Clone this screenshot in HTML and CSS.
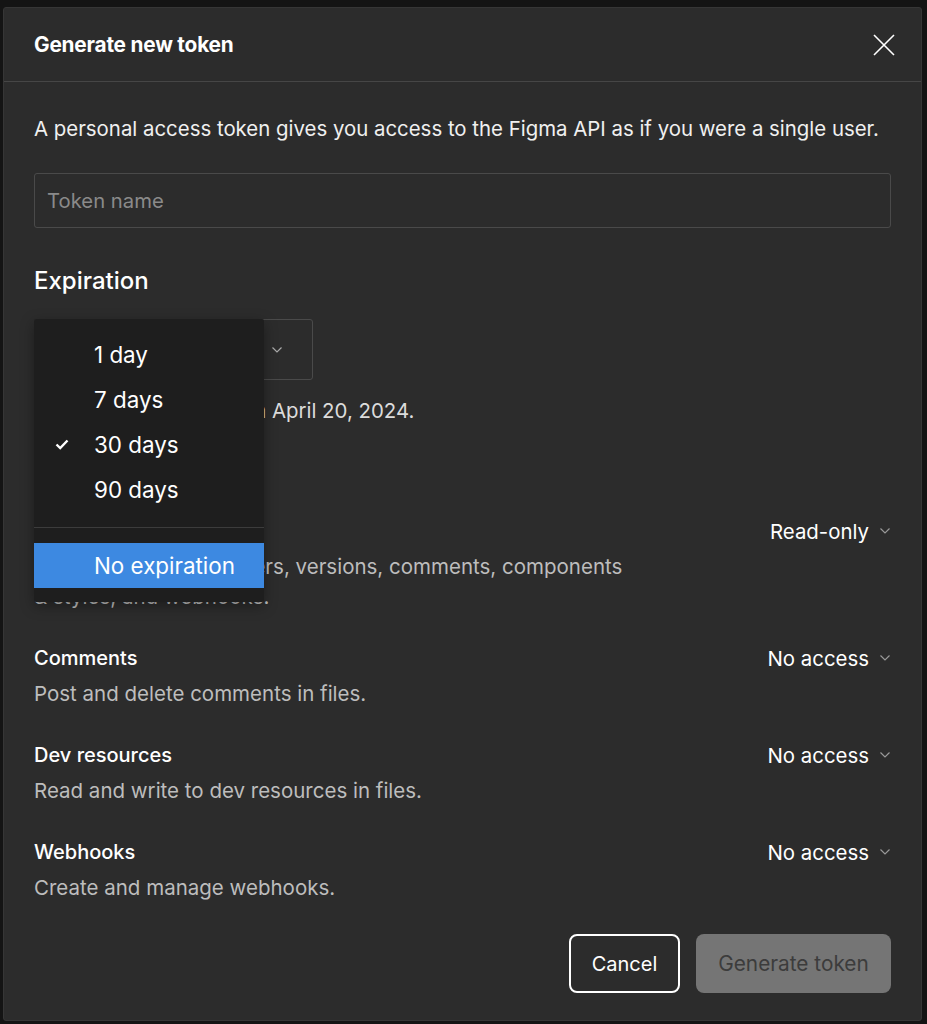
FILE: index.html
```html
<!DOCTYPE html>
<html lang="en">
<head>
  <meta charset="UTF-8">
  <meta name="viewport" content="width=device-width, initial-scale=1.0">
  <title>Generate new token</title>
  <link rel="stylesheet" href="styles.css">
</head>
<body>
  <div class="modal">
    <div class="modal-header">
      <h1>Generate new token</h1>
      <button class="close" aria-label="Close">
        <svg width="22" height="22" viewBox="0 0 22 22"><path d="M1 1L21 21M21 1L1 21" stroke="#fff" stroke-width="1.6" fill="none"/></svg>
      </button>
    </div>

    <div class="modal-body">
      <p class="intro">A personal access token gives you access to the Figma API as if you were a single user.</p>
      <input class="token-input" type="text" placeholder="Token name">

      <h2>Expiration</h2>
      <div class="expiration">
        <div class="select">
          <span>30 days</span>
          <svg class="chev" width="10" height="6" viewBox="0 0 10 6"><path d="M0.5 0.5L5 5L9.5 0.5" stroke="#aaa" stroke-width="1.2" fill="none"/></svg>
        </div>
        <p class="expires">This token will expire on April 20, 2024.</p>

        <!-- menu opened over the rest of the form -->
        <ul class="menu">
          <li>1 day</li>
          <li>7 days</li>
          <li class="checked">
            <svg class="check" width="14" height="11" viewBox="0 0 14 11"><path d="M1.5 5.5L5.2 9L12.5 1.5" stroke="#fff" stroke-width="2.4" fill="none"/></svg>
            30 days
          </li>
          <li>90 days</li>
          <li class="sep"></li>
          <li class="active">No expiration</li>
        </ul>
      </div>

      <div class="scopes">
        <div class="scope first">
          <div class="scope-row">
            <span class="scope-name">File content</span>
            <span class="scope-select">Read-only <svg width="10" height="6" viewBox="0 0 10 6"><path d="M0.5 0.5L5 5L9.5 0.5" stroke="#999" stroke-width="1.2" fill="none"/></svg></span>
          </div>
          <p class="scope-desc">Read files and their layers, versions, comments, components<br>&amp; styles, and webhooks.</p>
        </div>
        <div class="scope">
          <div class="scope-row">
            <span class="scope-name">Comments</span>
            <span class="scope-select">No access <svg width="10" height="6" viewBox="0 0 10 6"><path d="M0.5 0.5L5 5L9.5 0.5" stroke="#999" stroke-width="1.2" fill="none"/></svg></span>
          </div>
          <p class="scope-desc">Post and delete comments in files.</p>
        </div>
        <div class="scope">
          <div class="scope-row">
            <span class="scope-name">Dev resources</span>
            <span class="scope-select">No access <svg width="10" height="6" viewBox="0 0 10 6"><path d="M0.5 0.5L5 5L9.5 0.5" stroke="#999" stroke-width="1.2" fill="none"/></svg></span>
          </div>
          <p class="scope-desc">Read and write to dev resources in files.</p>
        </div>
        <div class="scope">
          <div class="scope-row">
            <span class="scope-name">Webhooks</span>
            <span class="scope-select">No access <svg width="10" height="6" viewBox="0 0 10 6"><path d="M0.5 0.5L5 5L9.5 0.5" stroke="#999" stroke-width="1.2" fill="none"/></svg></span>
          </div>
          <p class="scope-desc">Create and manage webhooks.</p>
        </div>
      </div>

      <div class="actions">
        <button class="btn btn-cancel">Cancel</button>
        <button class="btn btn-primary" disabled>Generate token</button>
      </div>
    </div>
  </div>
</body>
</html>
```

FILE: styles.css
```css
* {
  margin: 0;
  padding: 0;
  box-sizing: border-box;
}
body {
  background: #141414;
  padding: 7px 5px 3px 3px;
  font-family: Inter, "Liberation Sans", sans-serif;
  color: #fff;
}
.modal {
  width: 919px;
  height: 1014px;
  background: #2c2c2c;
  border: 1px solid #363636;
  border-radius: 3px;
}
.modal-header {
  height: 74px;
  display: flex;
  align-items: center;
  justify-content: space-between;
  padding: 0 26px 0 30px;
  border-bottom: 1px solid #464646;
}
h1 {
  font-size: 20.8px;
  font-weight: 700;
  letter-spacing: -0.2px;
}
.close {
  background: none;
  border: none;
  width: 22px;
  height: 22px;
  cursor: pointer;
}
.close svg {
  display: block;
}
.modal-body {
  padding: 0 30px 0 30px;
}
.intro {
  font-size: 20.4px;
  line-height: 24px;
  margin-top: 35px;
  color: #f0f0f0;
}
.token-input {
  display: block;
  width: 100%;
  height: 55px;
  margin-top: 32px;
  background: transparent;
  border: 1.5px solid #4a4a4a;
  border-radius: 3px;
  padding: 0 12px;
  font-family: inherit;
  font-size: 20.3px;
  color: #fff;
}
.token-input::placeholder {
  color: #8a8a8a;
}
h2 {
  font-size: 24px;
  font-weight: 500;
  line-height: 28px;
  margin-top: 39px;
}
.expiration {
  position: relative;
  margin-top: 24px;
}
.select {
  width: 279px;
  height: 61px;
  border: 1.5px solid #4a4a4a;
  border-radius: 3px;
  display: flex;
  align-items: center;
  justify-content: space-between;
  padding: 0 30px 0 58px;
  font-size: 20px;
}
.expires {
  font-size: 20.4px;
  line-height: 24px;
  margin-top: 19px;
  color: #dcdcdc;
}
.menu {
  list-style: none;
  position: absolute;
  top: 0;
  left: 0;
  width: 230px;
  background: #1e1e1e;
  border-radius: 2px;
  box-shadow: 0 4px 14px rgba(0, 0, 0, 0.35);
  padding: 13px 0 14px;
  z-index: 2;
}
.menu li {
  position: relative;
  height: 45px;
  line-height: 45px;
  padding-left: 60px;
  font-size: 22.4px;
  color: #fff;
}
.menu .check {
  position: absolute;
  left: 21px;
  top: 17px;
}
.menu .sep {
  height: 1px;
  margin: 15px 0 15px;
  background: #3c3c3c;
}
.menu .active {
  background: #3d89e1;
  height: 45px;
}
.scope {
  margin-top: 34px;
}
.scope.first {
  margin-top: 96px;
}
.scope-row {
  display: flex;
  justify-content: space-between;
  align-items: center;
  height: 24px;
}
.scope-name {
  font-size: 20px;
  font-weight: 500;
}
.scope-select {
  font-size: 20.4px;
  display: flex;
  align-items: center;
  gap: 11px;
  margin-right: 1px;
}
.scope-desc {
  font-size: 20.5px;
  line-height: 30px;
  color: #bdbdbd;
  margin-top: 9px;
}
.actions {
  display: flex;
  justify-content: flex-end;
  gap: 16px;
  margin-top: 31px;
}
.btn {
  height: 59px;
  border-radius: 8px;
  font-family: inherit;
  font-size: 20px;
  cursor: pointer;
}
.btn-cancel {
  width: 111px;
  background: transparent;
  border: 2px solid #fff;
  color: #fff;
}
.btn-primary {
  width: 195px;
  background: #757575;
  border: none;
  color: #3c3c3c;
  font-size: 20.8px;
}
```
